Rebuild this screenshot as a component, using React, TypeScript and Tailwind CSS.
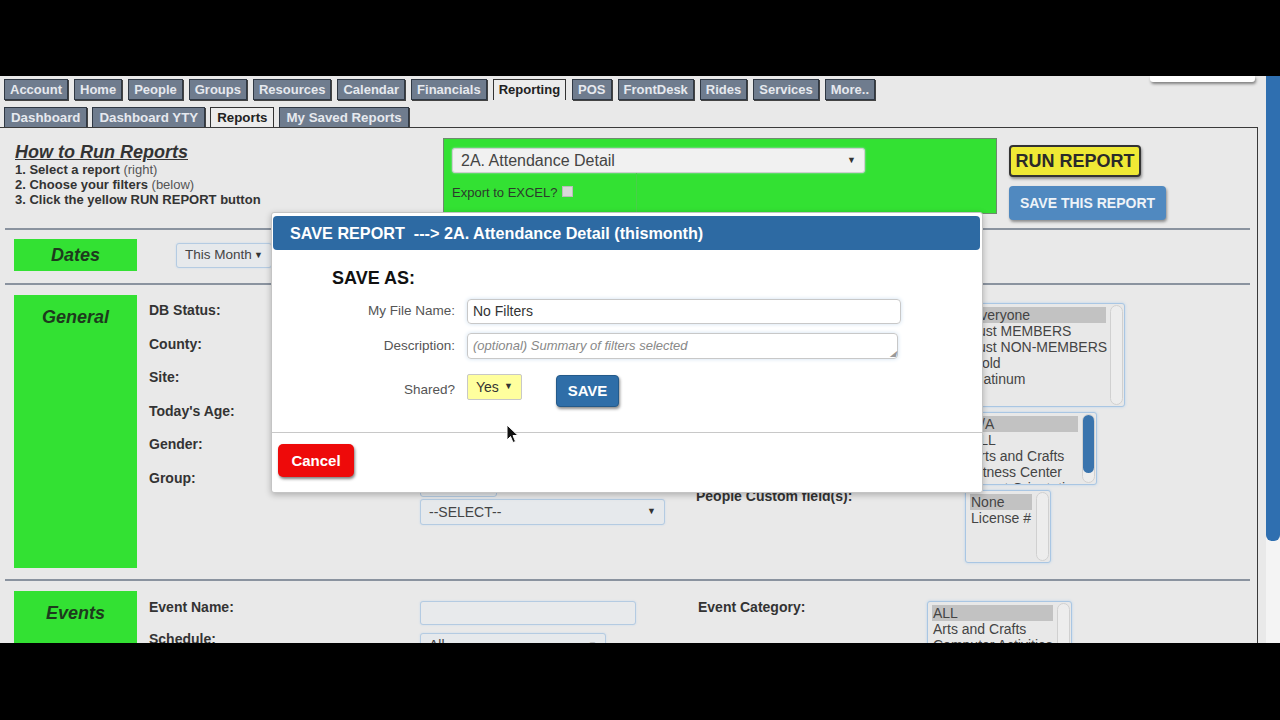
import React from 'react';

const topTabs = ['Account', 'Home', 'People', 'Groups', 'Resources', 'Calendar', 'Financials', 'Reporting', 'POS', 'FrontDesk', 'Rides', 'Services', 'More..']
const subTabs = ['Dashboard', 'Dashboard YTY', 'Reports', 'My Saved Reports']

function Tab({ label, active, wide }: { label: string; active?: boolean; wide?: boolean }) {
  const pad = wide ? ' px-[6px] text-[13.3px]' : ' px-[5px] text-[13px]'
  return (
    <div
      className={
        (active
          ? 'h-[21px] border border-b-0 border-[#333] bg-[#ececec] text-[#222] leading-[20px] font-bold whitespace-nowrap'
          : 'h-[21px] border border-[#2f3844] bg-[#6f7c8e] text-[#e6e9ee] leading-[20px] font-bold whitespace-nowrap shadow-[1px_1px_0_#444]') + pad
      }
    >
      {label}
    </div>
  )
}

function SelectBox({ text, className }: { text: string; className: string }) {
  return (
    <div className={'shrink-0 whitespace-nowrap flex items-center justify-between border border-[#b4cbe2] rounded-[3px] bg-[#e6e9ec] shadow-[0_0_2px_#c5d7ea] px-[8px] text-[#444] ' + className}>
      <span>{text}</span>
      <span className="text-[9px] text-[#333]">▼</span>
    </div>
  )
}

interface ListBoxProps {
  items: string[]
  w: string
  h: string
  thumb?: boolean
}

function ListBox({ items, w, h, thumb }: ListBoxProps) {
  return (
    <div className={'relative shrink-0 border border-[#a9c6e3] rounded-[3px] bg-[#e8e8e8] shadow-[0_0_3px_#b9d2ea] overflow-hidden ' + w + ' ' + h}>
      <div className="pl-[4px] pt-[3px] pr-[18px]">
        {items.map((it, i) => (
          <div key={it} className={'h-[16px] leading-[16px] text-[14px] text-[#444] pl-[1px] whitespace-nowrap ' + (i === 0 ? 'bg-[#c2c2c2]' : '')}>
            {it}
          </div>
        ))}
      </div>
      <div className="absolute right-[1px] top-[1px] bottom-[1px] w-[13px] rounded-full border border-[#d0d0d0] bg-[#ededed]">
        {thumb && <div className="w-full h-[58px] rounded-full bg-[#3a74ad]" />}
      </div>
    </div>
  )
}

function GreenBox({ label, h }: { label: string; h: string }) {
  return (
    <div className={'w-[123px] bg-[#33e133] text-center italic font-bold text-[18px] text-[#1d3a1d] ' + h}>
      {label}
    </div>
  )
}

function Rule() {
  return <div className="shrink-0 ml-[5px] w-[1245px] h-[2px] bg-[#8a939f]" />
}

function SaveModal() {
  return (
    <div className="absolute left-[271px] top-[136px] w-[712px] h-[281px] bg-white border border-[#c4c4c4] rounded-[3px] shadow-[0_2px_6px_rgba(0,0,0,0.25)] z-10">
      <div className="ml-[1px] mt-[3px] w-[707px] h-[34px] rounded-[4px] bg-[#2d6aa3] text-white font-bold text-[16.2px] leading-[34px] pl-[17px] whitespace-pre">
        {'SAVE REPORT  ---> 2A. Attendance Detail (thismonth)'}
      </div>
      <div className="pl-[60px] pt-[17px] font-bold text-[18px] leading-[22px] text-[#111]">SAVE AS:</div>
      <div className="mt-[10px] flex items-center">
        <div className="w-[183px] text-right text-[13.5px] text-[#555]">My File Name:</div>
        <div className="ml-[12px] w-[434px] h-[25px] border border-[#c8c8c8] rounded-[4px] shadow-[0_0_4px_#cfe0f0] px-[5px] text-[14px] leading-[23px] text-[#333]">
          No Filters
        </div>
      </div>
      <div className="mt-[9px] flex items-center">
        <div className="w-[183px] text-right text-[13.5px] text-[#555]">Description:</div>
        <div className="ml-[12px] w-[431px] h-[26px] border border-[#c8c8c8] rounded-[4px] shadow-[0_0_4px_#cfe0f0] px-[5px] text-[13px] leading-[23px] italic text-[#888] relative">
          (optional) Summary of filters selected
          <span className="absolute right-[1px] bottom-[0px] text-[8px] leading-[8px] text-[#999]">◢</span>
        </div>
      </div>
      <div className="mt-[15px] flex items-start">
        <div className="w-[183px] text-right text-[13.5px] text-[#555] pt-[6px]">Shared?</div>
        <div className="ml-[12px] w-[55px] h-[26px] border border-[#c8c8c8] rounded-[2px] bg-[#ffff9e] flex items-center justify-between px-[8px] text-[14px] text-[#333]">
          <span>Yes</span>
          <span className="text-[9px]">▼</span>
        </div>
        <div className="ml-[34px] mt-[1px] w-[63px] h-[32px] rounded-[4px] bg-[#2f6ea8] border border-[#245a8a] shadow-[1px_2px_3px_rgba(0,0,0,0.45)] text-white font-bold text-[15px] leading-[30px] text-center">
          SAVE
        </div>
      </div>
      <div className="mt-[25px] h-[1px] bg-[#c8c8c8]" />
      <div className="ml-[6px] mt-[11px] w-[76px] h-[33px] rounded-[5px] bg-[#ee0a0a] shadow-[1px_2px_3px_rgba(0,0,0,0.5)] text-white font-bold text-[15px] leading-[33px] text-center">
        Cancel
      </div>
    </div>
  )
}

export default function App() {
  return (
    <div className="w-[1280px] h-[720px] bg-black flex flex-col overflow-hidden" style={{ fontFamily: '"Liberation Sans", Arial, sans-serif' }}>
      <div className="h-[76px] shrink-0" />
      <div className="h-[567px] shrink-0 relative bg-[#e9e9e9] flex overflow-hidden">
        <div className="w-[1266px] shrink-0 flex flex-col overflow-hidden">
          {/* top nav */}
          <div className="shrink-0 flex gap-[6px] pl-[4px] pt-[3px] h-[31px]">
            {topTabs.map((t) => (
              <Tab key={t} label={t} active={t === 'Reporting'} />
            ))}
            <div className="ml-auto mr-[11px] -mt-[3px] w-[105px] h-[6px] bg-white rounded-b-[3px] shadow-[1px_2px_3px_rgba(0,0,0,0.45)]" />
          </div>
          <div className="shrink-0 flex gap-[5px] pl-[4px] h-[20px] overflow-hidden">
            {subTabs.map((t) => (
              <Tab key={t} label={t} active={t === 'Reports'} wide />
            ))}
          </div>

          <div className="w-[1258px] flex-1 border-t border-r border-[#3a3a3a] flex flex-col">
            {/* instructions + report picker */}
            <div className="shrink-0 h-[100px] flex items-start">
              <div className="w-[443px] shrink-0 pl-[15px] pt-[14px] text-[#333]">
                <div className="text-[18px] leading-[20px] font-bold italic underline">How to Run Reports</div>
                <div className="text-[13px] leading-[15px] font-bold">1. Select a report <span className="font-normal text-[#555]">(right)</span></div>
                <div className="text-[13px] leading-[15px] font-bold">2. Choose your filters <span className="font-normal text-[#555]">(below)</span></div>
                <div className="text-[13px] leading-[15px] font-bold">3. Click the yellow RUN REPORT button</div>
              </div>
              <div className="shrink-0 mt-[10px] w-[554px] h-[76px] bg-[#33e133] border border-[#6e8a6e] pl-[8px] pt-[9px] flex flex-col">
                <SelectBox text="2A. Attendance Detail" className="w-[413px] h-[25px] text-[16px] bg-[#f1f1f1] border-[#cfcfcf]" />
                <div className="flex flex-1">
                  <div className="w-[185px] flex items-center gap-[4px] text-[13px] text-[#2c3a2c] border-r border-[#49d049]">
                    Export to EXCEL?
                    <span className="inline-block w-[11px] h-[11px] bg-[#d9d9d9] border border-[#bbb] -mt-[4px]" />
                  </div>
                </div>
              </div>
              <div className="ml-[12px] mt-[17px] flex flex-col items-start gap-[9px]">
                <div className="w-[132px] h-[32px] bg-[#efe935] border-2 border-[#333] rounded-[4px] shadow-[1px_2px_3px_rgba(0,0,0,0.4)] text-[18px] font-bold text-[#2a2a2a] leading-[28px] text-center">
                  RUN REPORT
                </div>
                <div className="w-[157px] h-[34px] bg-[#5089c0] rounded-[4px] shadow-[1px_2px_3px_rgba(0,0,0,0.4)] text-[14px] font-bold text-[#eef3f8] leading-[34px] text-center">
                  SAVE THIS REPORT
                </div>
              </div>
            </div>
            <Rule />

            {/* dates */}
            <div className="shrink-0 h-[53px] flex items-start pt-[9px]">
              <div className="ml-[14px]">
                <GreenBox label="Dates" h="h-[32px] leading-[32px]" />
              </div>
              <SelectBox text="This Month" className="ml-[39px] mt-[4px] w-[96px] h-[25px] text-[13.5px]" />
            </div>
            <Rule />

            {/* general */}
            <div className="shrink-0 h-[294px] flex items-start">
              <div className="ml-[14px] mt-[10px]">
                <GreenBox label="General" h="h-[273px] pt-[10px] leading-[24px]" />
              </div>
              <div className="ml-[12px] w-[271px] shrink-0 pt-[9px] text-[14px] font-bold text-[#333]">
                {['DB Status:', 'County:', 'Site:', "Today's Age:", 'Gender:', 'Group:'].map((l) => (
                  <div key={l} className="h-[33.5px] leading-[33.5px]">{l}</div>
                ))}
              </div>
              <div className="w-[276px] shrink-0 flex flex-col">
                <div className="h-[187px]" />
                <div className="w-[77px] h-[25px] border border-[#b4cbe2] rounded-[3px] bg-[#e6e9ec]" />
                <SelectBox text="--SELECT--" className="mt-[2px] w-[245px] h-[26px] text-[14px]" />
              </div>
              <div className="w-[269px] shrink-0 pt-[203px] text-[14px] font-bold text-[#333] leading-[16px]">People Custom field(s):</div>
              <div className="flex flex-col pt-[18px] gap-[5px]">
                <ListBox items={['Everyone', 'Just MEMBERS', 'Just NON-MEMBERS', 'Gold', 'Platinum']} w="w-[160px]" h="h-[104px]" />
                <ListBox items={['N/A', 'ALL', 'Arts and Crafts', 'Fitness Center', 'Guest Orientation']} w="w-[132px]" h="h-[73px]" thumb />
                <ListBox items={['None', 'License #']} w="w-[86px]" h="h-[73px]" />
              </div>
            </div>
            <Rule />

            {/* events */}
            <div className="flex-1 flex items-start">
              <div className="ml-[14px] mt-[10px]">
                <GreenBox label="Events" h="h-[70px] pt-[10px] leading-[24px]" />
              </div>
              <div className="ml-[12px] w-[271px] shrink-0 pt-[18px] text-[14px] font-bold text-[#333]">
                <div className="h-[32px] leading-[16px]">Event Name:</div>
                <div className="leading-[16px]">Schedule:</div>
              </div>
              <div className="w-[278px] shrink-0 pt-[20px] flex flex-col gap-[8px]">
                <div className="w-[216px] h-[24px] border border-[#b4cbe2] rounded-[3px] bg-[#e8eaec] shadow-[0_0_2px_#c5d7ea]" />
                <SelectBox text="All" className="w-[186px] h-[25px] text-[14px]" />
              </div>
              <div className="w-[229px] shrink-0 pt-[18px] text-[14px] font-bold text-[#333] leading-[16px]">Event Category:</div>
              <div className="pt-[20px]">
                <ListBox items={['ALL', 'Arts and Crafts', 'Computer Activities']} w="w-[145px]" h="h-[80px]" />
              </div>
            </div>
          </div>
        </div>

        {/* page scrollbar */}
        <div className="w-[14px] shrink-0 bg-[#f4f4f4]">
          <div className="h-[465px] bg-[#2f6fb0] rounded-b-[6px]" />
        </div>

        <SaveModal />

        {/* mouse pointer */}
        <svg className="absolute left-[506px] top-[348px] z-20" width="13" height="20" viewBox="0 0 13 20">
          <path d="M1 1 L1 16 L4.5 12.5 L7 18.5 L9.5 17.5 L7 11.5 L12 11.5 Z" fill="#111" stroke="#fff" strokeWidth="1" />
        </svg>
      </div>
      <div className="flex-1" />
    </div>
  )
}
